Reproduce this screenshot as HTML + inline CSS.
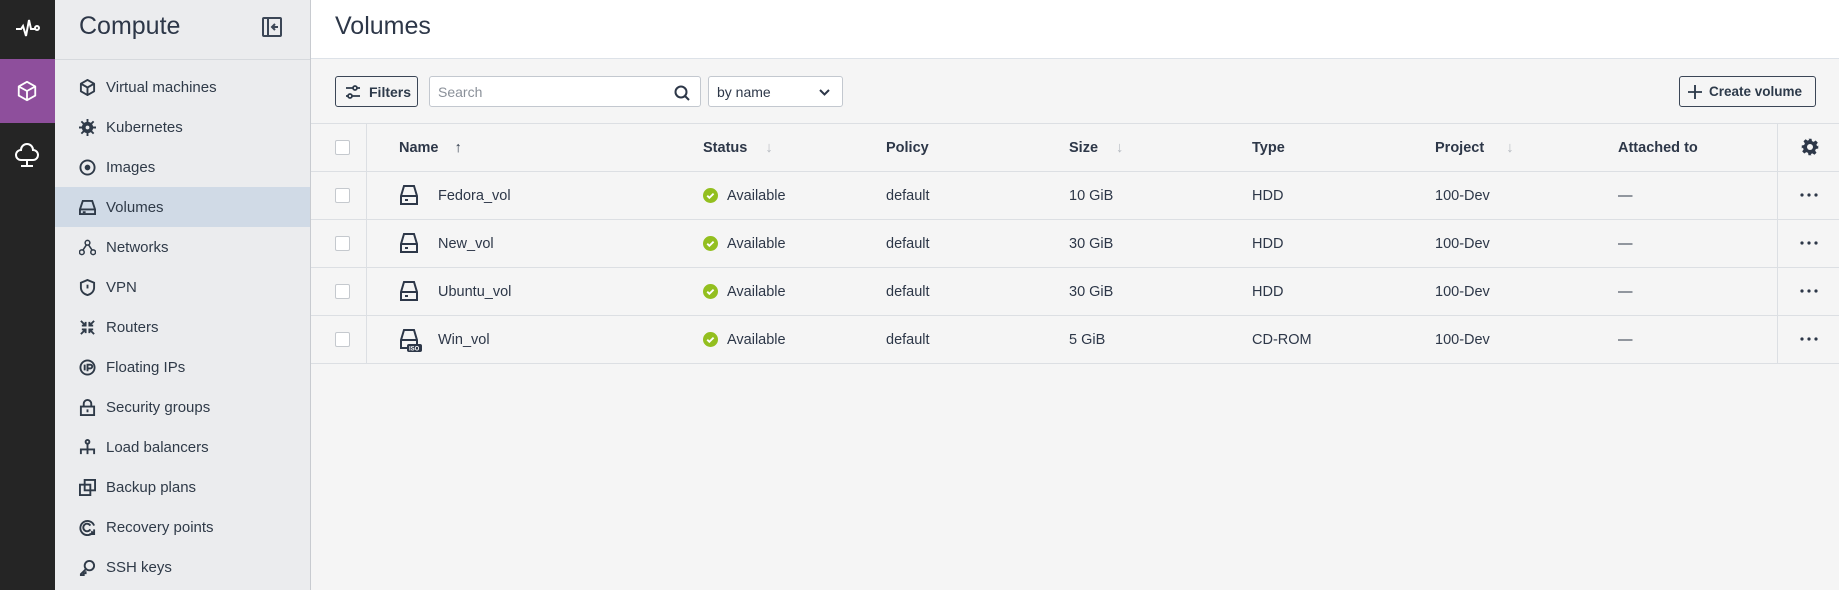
<!DOCTYPE html>
<html><head><meta charset="utf-8"><style>
*{box-sizing:border-box;margin:0;padding:0}
body{width:1839px;height:590px;overflow:hidden;font-family:"Liberation Sans",sans-serif;color:#2d3748;background:#f5f5f5;position:relative;font-size:15px}
.abs{position:absolute}
.rail{left:0;top:0;width:55px;height:590px;background:#252525}
.side{left:55px;top:0;width:256px;height:590px;background:#ebecee;border-right:1px solid #c8cbd0}
.nav{position:absolute;left:0;width:255px;height:40px;display:flex;align-items:center;padding-left:24px;color:#2f3a48;font-size:15px}
.nav svg{width:17px;height:17px;margin-right:10px;flex:none}
.nav.act{background:#d0dae6}
.main{left:311px;top:0;width:1528px;height:59px;background:#fff;border-bottom:1px solid #dde2e8}
.btn{position:absolute;border:1px solid #3b4656;border-radius:3px;height:31px;display:flex;align-items:center;font-weight:bold;font-size:14px;color:#2d3a4a;background:#f5f5f5;white-space:nowrap}
.inp{position:absolute;border:1px solid #c3c8cf;border-radius:3px;height:31px;background:#fff;display:flex;align-items:center;font-size:14px}
.hl{position:absolute;left:311px;width:1528px;height:1px;background:#dcdfe3}
.vl{position:absolute;width:1px;background:#dcdfe3}
.cb{position:absolute;left:335px;width:15px;height:15px;border:1px solid #c5c9ce;background:#fff;border-radius:2px}
.t{position:absolute;font-size:14.5px;color:#2d3748;line-height:18px}
.h{font-weight:bold}
.arr{color:#b8bcc2;font-weight:normal}
</style></head><body>
<div class="abs rail">
 <svg class="abs" style="left:15px;top:17px" width="26" height="22" viewBox="0 0 26 22" fill="none" stroke="#fff" stroke-width="2"><path d="M1 12h5l2-3 3 10 3-16 2 9h4"/><circle cx="22" cy="11" r="2"/></svg>
 <div class="abs" style="left:0;top:59px;width:55px;height:64px;background:#8e4f9c"></div>
 <svg class="abs" style="left:16px;top:80px" width="22" height="22" viewBox="0 0 24 24" fill="none" stroke="#fff" stroke-width="2" stroke-linejoin="round"><path d="M12 2l9 5v10l-9 5-9-5V7z M3 7l9 5 9-5 M12 12v10"/></svg>
 <svg class="abs" style="left:14px;top:143px" width="26" height="26" viewBox="0 0 26 26" fill="none" stroke="#fff" stroke-width="2"><path d="M7 17a5 5 0 0 1 0-10 6 6 0 0 1 12 0 5 5 0 0 1 0 10z M13 17v6 M7 23h12"/></svg>
</div>
<div class="abs side">
 <div class="abs" style="left:24px;top:12px;font-size:25px;color:#2d3748">Compute</div>
 <svg class="abs" style="left:207px;top:17px" width="20" height="20" viewBox="0 0 20 20" fill="none" stroke="#3b4656" stroke-width="2"><rect x="1" y="1" width="18" height="18" rx="1"/><path d="M6 1v18 M16 10H10 M13 7l-3 3 3 3"/></svg>
 <div class="abs" style="left:0;top:59px;width:255px;height:1px;background:#d6d9dd"></div>
 <div class="nav" style="top:67px"><svg viewBox="0 0 18 18" fill="none" stroke="#2f3a48" stroke-width="2" stroke-linejoin="round"><path d="M9 1l7 4v8l-7 4-7-4V5z M2 5l7 4 7-4 M9 9v8"/></svg>Virtual machines</div>
 <div class="nav" style="top:107px"><svg viewBox="0 0 18 18" fill="#2f3a48"><circle cx="9" cy="9" r="6"/><path d="M9 0v18M0 9h18M2.5 2.5l13 13M15.5 2.5l-13 13" stroke="#2f3a48" stroke-width="2"/><circle cx="9" cy="9" r="2" fill="#ebecee"/></svg>Kubernetes</div>
 <div class="nav" style="top:147px"><svg viewBox="0 0 18 18" fill="none" stroke="#2f3a48" stroke-width="2"><circle cx="9" cy="9" r="7.5"/><circle cx="9" cy="9" r="2" fill="#2f3a48"/></svg>Images</div>
 <div class="nav act" style="top:187px"><svg viewBox="0 0 18 18" fill="none" stroke="#2f3a48" stroke-width="2"><path d="M4 2h10l3 9v5H1v-5z M1 11h16"/><path d="M4 14h3" /></svg>Volumes</div>
 <div class="nav" style="top:227px"><svg viewBox="0 0 18 18" fill="none" stroke="#2f3a48" stroke-width="1.6"><circle cx="9" cy="4" r="2.5"/><circle cx="3" cy="14" r="2.5"/><circle cx="15" cy="14" r="2.5"/><path d="M8 6l-4 6M10 6l4 6"/></svg>Networks</div>
 <div class="nav" style="top:267px"><svg viewBox="0 0 18 18" fill="none" stroke="#2f3a48" stroke-width="2"><path d="M9 1l7 3v5c0 4-3 7-7 8-4-1-7-4-7-8V4z"/><path d="M9 6v4"/></svg>VPN</div>
 <div class="nav" style="top:307px"><svg viewBox="0 0 18 18" fill="none" stroke="#2f3a48" stroke-width="2"><path d="M2 2l5 5M7 3v4H3M16 2l-5 5M11 3v4h4M2 16l5-5M3 11h4v4M16 16l-5-5M15 11h-4v4"/></svg>Routers</div>
 <div class="nav" style="top:347px"><svg viewBox="0 0 18 18" fill="none" stroke="#2f3a48" stroke-width="2"><circle cx="9" cy="9" r="7.5"/><path d="M6 6v6M9 13V6h3a2 2 0 0 1 0 4H9"/></svg>Floating IPs</div>
 <div class="nav" style="top:387px"><svg viewBox="0 0 18 18" fill="none" stroke="#2f3a48" stroke-width="2"><rect x="2" y="8" width="14" height="9"/><path d="M5 8V5a4 4 0 0 1 8 0v3M9 11v3"/></svg>Security groups</div>
 <div class="nav" style="top:427px"><svg viewBox="0 0 18 18" fill="none" stroke="#2f3a48" stroke-width="2"><circle cx="9" cy="3" r="2"/><path d="M9 5v5M2 16v-5h14v5M9 10v6"/></svg>Load balancers</div>
 <div class="nav" style="top:467px"><svg viewBox="0 0 18 18" fill="none" stroke="#2f3a48" stroke-width="2"><rect x="1" y="6" width="11" height="11"/><rect x="6" y="1" width="11" height="11"/></svg>Backup plans</div>
 <div class="nav" style="top:507px"><svg viewBox="0 0 18 18" fill="none" stroke="#2f3a48" stroke-width="2"><path d="M16 7A7.5 7.5 0 1 0 15 14M13 13l3 3M16 11v5h-5"/><path d="M12 7a4 4 0 1 0 0 4"/></svg>Recovery points</div>
 <div class="nav" style="top:547px"><svg viewBox="0 0 18 18" fill="none" stroke="#2f3a48" stroke-width="2"><circle cx="11" cy="7" r="5"/><path d="M7 11l-5 5v1h3v-2h2v-2"/></svg>SSH keys</div>
</div>
<div class="abs main"><div class="abs" style="left:24px;top:12px;font-size:25px;color:#2d3748">Volumes</div></div>

<div class="btn" style="left:335px;top:76px;width:83px;padding-left:9px"><svg width="16" height="14" viewBox="0 0 16 14" fill="none" stroke="#2d3a4a" stroke-width="1.8" style="margin-right:8px"><path d="M1 3h14M1 11h14"/><circle cx="10" cy="3" r="2" fill="#f5f5f5"/><circle cx="5" cy="11" r="2" fill="#f5f5f5"/></svg>Filters</div>
<div class="inp" style="left:429px;top:76px;width:272px;padding-left:8px;color:#8a9099">Search<svg style="position:absolute;right:10px;top:8px" width="16" height="16" viewBox="0 0 16 16" fill="none" stroke="#2d3748" stroke-width="2"><circle cx="7" cy="7" r="5.5"/><path d="M11 11l4 4"/></svg></div>
<div class="inp" style="left:708px;top:76px;width:135px;padding-left:8px;color:#2d3748">by name<svg style="position:absolute;right:12px;top:12px" width="11" height="7" viewBox="0 0 11 7" fill="none" stroke="#2d3748" stroke-width="2"><path d="M1 1l4.5 4.5L10 1"/></svg></div>
<div class="btn" style="left:1679px;top:76px;width:137px;padding-left:8px;font-size:13.5px"><svg width="14" height="14" viewBox="0 0 15 15" stroke="#2d3a4a" stroke-width="2" style="margin-right:7px"><path d="M7.5 0v15M0 7.5h15"/></svg>Create volume</div>

<div class="hl" style="top:123px"></div>
<div class="hl" style="top:171px"></div>
<div class="hl" style="top:219px"></div>
<div class="hl" style="top:267px"></div>
<div class="hl" style="top:315px"></div>
<div class="hl" style="top:363px"></div>
<div class="vl" style="left:366px;top:124px;height:239px"></div>
<div class="vl" style="left:1777px;top:124px;height:239px"></div>

<div class="cb" style="top:140px"></div>
<div class="t h" style="left:399px;top:139px">Name <span style="margin-left:12px;color:#2d3748">↑</span></div>
<div class="t h" style="left:703px;top:139px">Status <span class="arr" style="margin-left:14px">↓</span></div>
<div class="t h" style="left:886px;top:139px">Policy</div>
<div class="t h" style="left:1069px;top:139px">Size <span class="arr" style="margin-left:14px">↓</span></div>
<div class="t h" style="left:1252px;top:139px">Type</div>
<div class="t h" style="left:1435px;top:139px">Project <span class="arr" style="margin-left:18px">↓</span></div>
<div class="t h" style="left:1618px;top:139px">Attached to</div>
<svg class="abs" style="left:1801px;top:138px" width="18" height="18" viewBox="0 0 24 24" fill="#2d3748"><path d="M10 1h4l.6 3.2 2.3 1 2.7-1.9 2.8 2.8-1.9 2.7 1 2.3L23 10v4l-3.2.6-1 2.3 1.9 2.7-2.8 2.8-2.7-1.9-2.3 1L14 23h-4l-.6-3.2-2.3-1-2.7 1.9-2.8-2.8 1.9-2.7-1-2.3L1 14v-4l3.2-.6 1-2.3-1.9-2.7 2.8-2.8 2.7 1.9 2.3-1z"/><circle cx="12" cy="12" r="4" fill="#f5f5f5"/></svg>

<!-- row 1 -->
<div class="cb" style="top:188px"></div>
<svg class="abs" style="left:400px;top:185px" width="18" height="20" viewBox="0 0 18 20" fill="none" stroke="#2d3748" stroke-width="2"><path d="M4 1h10l3 10v8H1v-8z M1 11h16 M5 15h3"/></svg>
<div class="t" style="left:438px;top:187px">Fedora_vol</div>
<svg class="abs" style="left:703px;top:188px" width="15" height="15" viewBox="0 0 16 16"><circle cx="8" cy="8" r="8" fill="#93bf1f"/><path d="M4.5 8.2l2.3 2.3 4.5-4.5" fill="none" stroke="#fff" stroke-width="2"/></svg>
<div class="t" style="left:727px;top:187px">Available</div>
<div class="t" style="left:886px;top:187px">default</div>
<div class="t" style="left:1069px;top:187px">10 GiB</div>
<div class="t" style="left:1252px;top:187px">HDD</div>
<div class="t" style="left:1435px;top:187px">100-Dev</div>
<div class="t" style="left:1618px;top:187px">—</div>
<svg class="abs" style="left:1799px;top:192px" width="22" height="6" viewBox="0 0 22 6" fill="#2d3748"><circle cx="3" cy="3" r="1.6"/><circle cx="10" cy="3" r="1.6"/><circle cx="17" cy="3" r="1.6"/></svg>
<!-- row 2 -->
<div class="cb" style="top:236px"></div>
<svg class="abs" style="left:400px;top:233px" width="18" height="20" viewBox="0 0 18 20" fill="none" stroke="#2d3748" stroke-width="2"><path d="M4 1h10l3 10v8H1v-8z M1 11h16 M5 15h3"/></svg>
<div class="t" style="left:438px;top:235px">New_vol</div>
<svg class="abs" style="left:703px;top:236px" width="15" height="15" viewBox="0 0 16 16"><circle cx="8" cy="8" r="8" fill="#93bf1f"/><path d="M4.5 8.2l2.3 2.3 4.5-4.5" fill="none" stroke="#fff" stroke-width="2"/></svg>
<div class="t" style="left:727px;top:235px">Available</div>
<div class="t" style="left:886px;top:235px">default</div>
<div class="t" style="left:1069px;top:235px">30 GiB</div>
<div class="t" style="left:1252px;top:235px">HDD</div>
<div class="t" style="left:1435px;top:235px">100-Dev</div>
<div class="t" style="left:1618px;top:235px">—</div>
<svg class="abs" style="left:1799px;top:240px" width="22" height="6" viewBox="0 0 22 6" fill="#2d3748"><circle cx="3" cy="3" r="1.6"/><circle cx="10" cy="3" r="1.6"/><circle cx="17" cy="3" r="1.6"/></svg>
<!-- row 3 -->
<div class="cb" style="top:284px"></div>
<svg class="abs" style="left:400px;top:281px" width="18" height="20" viewBox="0 0 18 20" fill="none" stroke="#2d3748" stroke-width="2"><path d="M4 1h10l3 10v8H1v-8z M1 11h16 M5 15h3"/></svg>
<div class="t" style="left:438px;top:283px">Ubuntu_vol</div>
<svg class="abs" style="left:703px;top:284px" width="15" height="15" viewBox="0 0 16 16"><circle cx="8" cy="8" r="8" fill="#93bf1f"/><path d="M4.5 8.2l2.3 2.3 4.5-4.5" fill="none" stroke="#fff" stroke-width="2"/></svg>
<div class="t" style="left:727px;top:283px">Available</div>
<div class="t" style="left:886px;top:283px">default</div>
<div class="t" style="left:1069px;top:283px">30 GiB</div>
<div class="t" style="left:1252px;top:283px">HDD</div>
<div class="t" style="left:1435px;top:283px">100-Dev</div>
<div class="t" style="left:1618px;top:283px">—</div>
<svg class="abs" style="left:1799px;top:288px" width="22" height="6" viewBox="0 0 22 6" fill="#2d3748"><circle cx="3" cy="3" r="1.6"/><circle cx="10" cy="3" r="1.6"/><circle cx="17" cy="3" r="1.6"/></svg>
<!-- row 4 -->
<div class="cb" style="top:332px"></div>
<svg class="abs" style="left:400px;top:329px" width="23" height="23" viewBox="0 0 23 23" fill="none" stroke="#2d3748" stroke-width="2"><path d="M4 1h10l3 10v8H1v-8z M1 11h16"/><rect x="7" y="15" width="15" height="8" rx="2" fill="#2d3748" stroke="none"/><text x="9" y="21.5" font-size="6" fill="#fff" stroke="none" font-family="Liberation Sans" font-weight="bold">ISO</text></svg>
<div class="t" style="left:438px;top:331px">Win_vol</div>
<svg class="abs" style="left:703px;top:332px" width="15" height="15" viewBox="0 0 16 16"><circle cx="8" cy="8" r="8" fill="#93bf1f"/><path d="M4.5 8.2l2.3 2.3 4.5-4.5" fill="none" stroke="#fff" stroke-width="2"/></svg>
<div class="t" style="left:727px;top:331px">Available</div>
<div class="t" style="left:886px;top:331px">default</div>
<div class="t" style="left:1069px;top:331px">5 GiB</div>
<div class="t" style="left:1252px;top:331px">CD-ROM</div>
<div class="t" style="left:1435px;top:331px">100-Dev</div>
<div class="t" style="left:1618px;top:331px">—</div>
<svg class="abs" style="left:1799px;top:336px" width="22" height="6" viewBox="0 0 22 6" fill="#2d3748"><circle cx="3" cy="3" r="1.6"/><circle cx="10" cy="3" r="1.6"/><circle cx="17" cy="3" r="1.6"/></svg>
</body></html>
